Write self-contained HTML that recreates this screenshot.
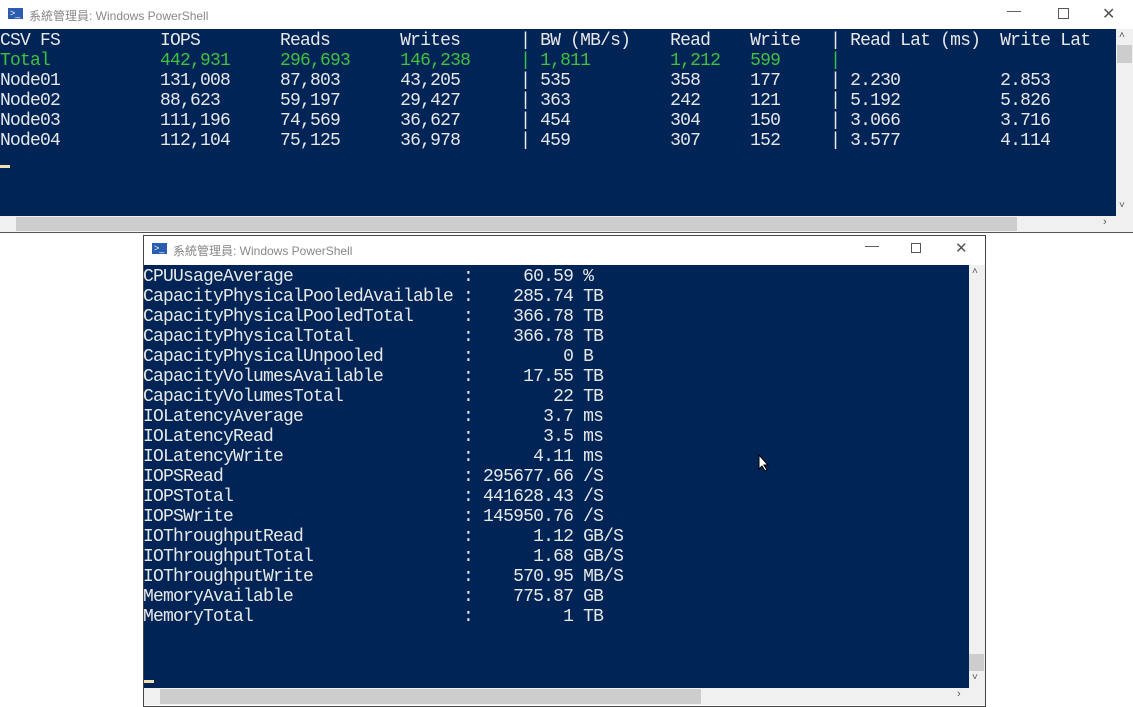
<!DOCTYPE html>
<html><head><meta charset="utf-8"><style>
*{margin:0;padding:0;box-sizing:border-box}
body{width:1133px;height:707px;background:#fff;position:relative;overflow:hidden;font-family:"Liberation Sans","Noto Sans CJK TC",sans-serif}
.abs{position:absolute}
pre{font-family:"Liberation Mono",monospace;font-size:18px;letter-spacing:-0.8px;line-height:20px;color:#e8e8e8;white-space:pre;position:absolute}
.title{font-size:12px;color:#888}
.g{color:#3fc03f}
.icon{width:15px;height:11px;background:#2a5db0}
.ctl{color:#555;font-size:14px}
</style></head><body>
<!-- top window -->
<div class="abs icon" style="left:8px;top:8px"></div>
<div class="abs" style="left:10px;top:9px;color:#fff;font-size:9px;line-height:9px">&gt;_</div>
<div class="abs title" style="left:29px;top:7px">系統管理員: Windows PowerShell</div>
<div class="abs ctl" style="left:1007px;top:2px">—</div>
<div class="abs" style="left:1058px;top:8px;width:11px;height:11px;border:1px solid #555"></div>
<div class="abs ctl" style="left:1102px;top:4px;font-size:16px">✕</div>
<div class="abs" style="left:0;top:29px;width:1116px;height:187px;background:#012456"></div>
<pre style="left:0;top:31px">CSV FS          IOPS        Reads       Writes      | BW (MB/s)    Read    Write   | Read Lat (ms)  Write Lat
<span class="g">Total           442,931     296,693     146,238     | 1,811        1,212   599     |</span>
Node01          131,008     87,803      43,205      | 535          358     177     | 2.230          2.853
Node02          88,623      59,197      29,427      | 363          242     121     | 5.192          5.826
Node03          111,196     74,569      36,627      | 454          304     150     | 3.066          3.716
Node04          112,104     75,125      36,978      | 459          307     152     | 3.577          4.114</pre>
<div class="abs" style="left:0;top:165px;width:10px;height:3px;background:#f5deb3"></div>
<div class="abs" style="left:1116px;top:29px;width:17px;height:187px;background:#f0f0f0"></div>
<div class="abs" style="left:1117px;top:45px;width:15px;height:18px;background:#cdcdcd"></div>
<div class="abs ctl" style="left:1119px;top:30px;font-size:10px">˄</div>
<div class="abs ctl" style="left:1119px;top:200px;font-size:10px">˅</div>
<div class="abs" style="left:0;top:216px;width:1133px;height:16px;background:#f0f0f0"></div>
<div class="abs" style="left:16px;top:217px;width:1001px;height:14px;background:#cdcdcd"></div>
<div class="abs ctl" style="left:1103px;top:216px;font-size:11px">›</div>
<div class="abs" style="left:0;top:232px;width:1133px;height:1px;background:#555"></div>
<!-- bottom window -->
<div class="abs" style="left:143px;top:235px;width:843px;height:472px;border:1px solid #444;background:#fff"></div>
<div class="abs icon" style="left:152px;top:243px"></div>
<div class="abs" style="left:154px;top:244px;color:#fff;font-size:9px;line-height:9px">&gt;_</div>
<div class="abs title" style="left:173px;top:242px">系統管理員: Windows PowerShell</div>
<div class="abs ctl" style="left:865px;top:237px">—</div>
<div class="abs" style="left:911px;top:243px;width:10px;height:10px;border:1px solid #555"></div>
<div class="abs ctl" style="left:955px;top:239px;font-size:15px">✕</div>
<div class="abs" style="left:144px;top:265px;width:825px;height:423px;background:#012456"></div>
<pre style="left:143px;top:267px">CPUUsageAverage                 :     60.59 %
CapacityPhysicalPooledAvailable :    285.74 TB
CapacityPhysicalPooledTotal     :    366.78 TB
CapacityPhysicalTotal           :    366.78 TB
CapacityPhysicalUnpooled        :         0 B
CapacityVolumesAvailable        :     17.55 TB
CapacityVolumesTotal            :        22 TB
IOLatencyAverage                :       3.7 ms
IOLatencyRead                   :       3.5 ms
IOLatencyWrite                  :      4.11 ms
IOPSRead                        : 295677.66 /S
IOPSTotal                       : 441628.43 /S
IOPSWrite                       : 145950.76 /S
IOThroughputRead                :      1.12 GB/S
IOThroughputTotal               :      1.68 GB/S
IOThroughputWrite               :    570.95 MB/S
MemoryAvailable                 :    775.87 GB
MemoryTotal                     :         1 TB</pre>
<div class="abs" style="left:144px;top:680px;width:10px;height:3px;background:#f5deb3"></div>
<div class="abs" style="left:969px;top:265px;width:16px;height:423px;background:#f0f0f0"></div>
<div class="abs" style="left:969px;top:654px;width:15px;height:17px;background:#cdcdcd"></div>
<div class="abs ctl" style="left:972px;top:266px;font-size:10px">˄</div>
<div class="abs ctl" style="left:972px;top:672px;font-size:10px">˅</div>
<div class="abs" style="left:144px;top:688px;width:841px;height:17px;background:#f0f0f0"></div>
<div class="abs" style="left:160px;top:689px;width:541px;height:15px;background:#cdcdcd"></div>
<div class="abs ctl" style="left:957px;top:688px;font-size:11px">›</div>
<!-- cursor -->
<svg class="abs" style="left:758px;top:454px" width="12" height="18" viewBox="0 0 12 18"><path d="M1 1 L1 15 L4 12 L7 17 L9 16 L6 11 L10 11 Z" fill="#fff" stroke="#000"/></svg>
</body></html>
